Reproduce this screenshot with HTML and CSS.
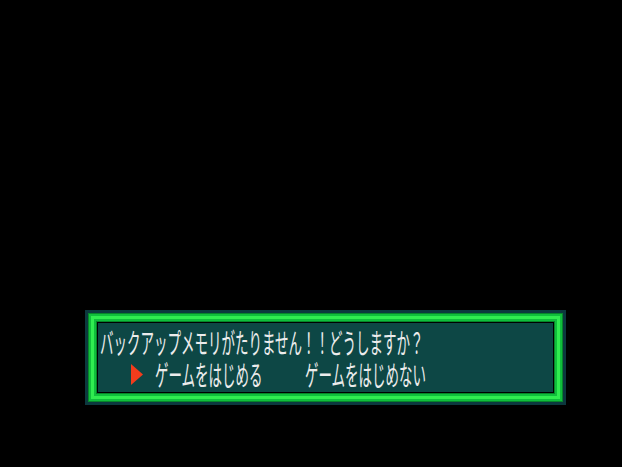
FILE: index.html
```html
<!DOCTYPE html>
<html lang="ja">
<head>
<meta charset="utf-8">
<link rel="stylesheet" href="styles.css">
</head>
<body>
<div class="screen">
  <div class="panel">
    <div class="frame">
      <div class="inner">
        <div class="line line1"><span class="txt">バックアップメモリがたりません！！どうしますか？</span></div>
        <div class="line line2">
          <span class="cursor"><svg width="12" height="21" viewBox="0 0 12 21"><polygon points="0,0 12,10.5 0,21" fill="#f23c1c"/></svg></span>
          <span class="opt opt1"><span class="txt">ゲームをはじめる</span></span>
          <span class="opt opt2"><span class="txt">ゲームをはじめない</span></span>
        </div>
      </div>
    </div>
  </div>
</div>
</body>
</html>
```

FILE: styles.css
```css
html, body {
  margin: 0;
  padding: 0;
  background: #000;
}
.screen {
  width: 622px;
  height: 467px;
  background: #000;
  overflow: hidden;
  display: flex;
  flex-direction: column;
  justify-content: flex-end;
  padding: 0 0 62px 85px;
  box-sizing: border-box;
}
.panel {
  width: 481px;
  height: 95px;
  padding: 3px;
  box-sizing: border-box;
  background: #0c383e;
}
.frame {
  height: 89px;
  padding: 10px;
  box-sizing: border-box;
  background: #0d4745;
  box-shadow:
    inset 0 0 0 1px #07862a,
    inset 0 0 0 3px #10be3c,
    inset 0 0 0 6px #30ec50,
    inset 0 0 0 8px #10be3c,
    inset 0 0 0 9px #07862a,
    inset 0 0 0 10px #000;
}
.inner {
  height: 69px;
  padding: 3px 0 0 2px;
  box-sizing: border-box;
  font-family: "Noto Sans CJK JP", sans-serif;
  color: #ececec;
}
.line {
  height: 32px;
  white-space: nowrap;
  display: flex;
  align-items: center;
}
.txt {
  display: inline-block;
  font-size: 13.5px;
  line-height: 13px;
  transform: scaleY(2.1);
  transform-origin: 50% 50%;
  white-space: nowrap;
}
.cursor {
  display: flex;
  margin-left: 31px;
  width: 12px;
  height: 21px;
}
.opt {
  display: flex;
  align-items: center;
}
.opt1 {
  margin-left: 12px;
  width: 150px;
}
.opt2 {
  width: 140px;
}
```
